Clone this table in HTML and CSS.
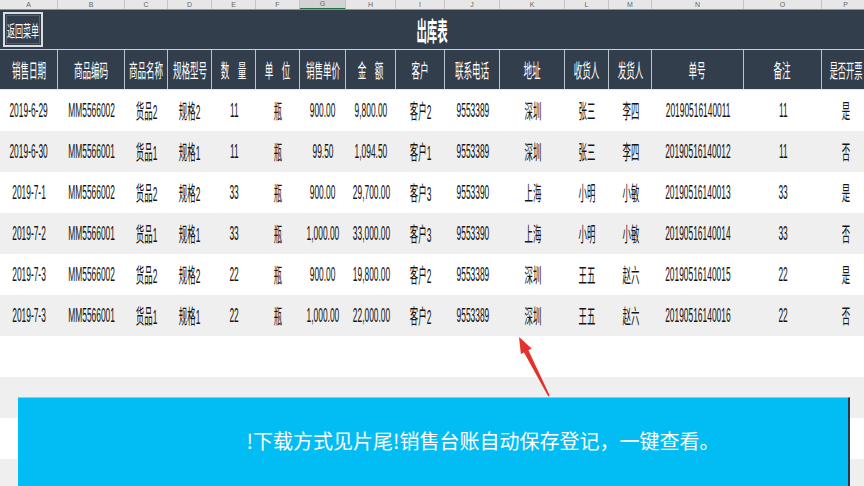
FILE: index.html
```html
<!DOCTYPE html>
<html lang="zh">
<head>
<meta charset="utf-8">
<title>出库表</title>
<link rel="stylesheet" href="styles.css">
</head>
<body>
<div class="page">
  <div class="sheet">
    <div class="colbar grid">
      <div class="cc"><span>A</span></div><div class="cc"><span>B</span></div><div class="cc"><span>C</span></div><div class="cc"><span>D</span></div>
      <div class="cc"><span>E</span></div><div class="cc"><span>F</span></div><div class="cc sel"><span>G</span></div><div class="cc"><span>H</span></div>
      <div class="cc"><span>I</span></div><div class="cc"><span>J</span></div><div class="cc"><span>K</span></div><div class="cc"><span>L</span></div>
      <div class="cc"><span>M</span></div><div class="cc"><span>N</span></div><div class="cc"><span>O</span></div><div class="cc"><span>P</span></div>
    </div>
    <div class="titlebar">
      <div class="tb-left"><div class="backbtn"><span class="t">返回菜单</span></div></div>
      <div class="title"><span class="t">出库表</span></div>
      <div class="tb-right"></div>
    </div>
    <div class="head grid">
      <div class="hc"><span class="t">销售日期</span></div>
      <div class="hc"><span class="t">商品编码</span></div>
      <div class="hc"><span class="t">商品名称</span></div>
      <div class="hc"><span class="t">规格型号</span></div>
      <div class="hc"><span class="t">数　量</span></div>
      <div class="hc"><span class="t">单　位</span></div>
      <div class="hc"><span class="t">销售单价</span></div>
      <div class="hc"><span class="t">金　额</span></div>
      <div class="hc"><span class="t">客户</span></div>
      <div class="hc"><span class="t">联系电话</span></div>
      <div class="hc"><span class="t">地址</span></div>
      <div class="hc"><span class="t">收货人</span></div>
      <div class="hc"><span class="t">发货人</span></div>
      <div class="hc"><span class="t">单号</span></div>
      <div class="hc"><span class="t">备注</span></div>
      <div class="hc last"><span class="t">是否开票</span></div>
    </div>
    <div class="row grid">
      <div class="c"><span class="t">2019-6-29</span></div><div class="c"><span class="t">MM5566002</span></div><div class="c"><span class="t">货品2</span></div><div class="c"><span class="t">规格2</span></div>
      <div class="c"><span class="t">11</span></div><div class="c"><span class="t">瓶</span></div><div class="c"><span class="t">900.00</span></div><div class="c"><span class="t">9,800.00</span></div>
      <div class="c"><span class="t">客户2</span></div><div class="c"><span class="t">9553389</span></div><div class="c"><span class="t">深圳</span></div><div class="c"><span class="t">张三</span></div>
      <div class="c"><span class="t">李四</span></div><div class="c"><span class="t">20190516140011</span></div><div class="c"><span class="t">11</span></div><div class="c"><span class="t">是</span></div>
    </div>
    <div class="row grid alt">
      <div class="c"><span class="t">2019-6-30</span></div><div class="c"><span class="t">MM5566001</span></div><div class="c"><span class="t">货品1</span></div><div class="c"><span class="t">规格1</span></div>
      <div class="c"><span class="t">11</span></div><div class="c"><span class="t">瓶</span></div><div class="c"><span class="t">99.50</span></div><div class="c"><span class="t">1,094.50</span></div>
      <div class="c"><span class="t">客户1</span></div><div class="c"><span class="t">9553389</span></div><div class="c"><span class="t">深圳</span></div><div class="c"><span class="t">张三</span></div>
      <div class="c"><span class="t">李四</span></div><div class="c"><span class="t">20190516140012</span></div><div class="c"><span class="t">11</span></div><div class="c"><span class="t">否</span></div>
    </div>
    <div class="row grid">
      <div class="c"><span class="t">2019-7-1</span></div><div class="c"><span class="t">MM5566002</span></div><div class="c"><span class="t">货品2</span></div><div class="c"><span class="t">规格2</span></div>
      <div class="c"><span class="t">33</span></div><div class="c"><span class="t">瓶</span></div><div class="c"><span class="t">900.00</span></div><div class="c"><span class="t">29,700.00</span></div>
      <div class="c"><span class="t">客户3</span></div><div class="c"><span class="t">9553390</span></div><div class="c"><span class="t">上海</span></div><div class="c"><span class="t">小明</span></div>
      <div class="c"><span class="t">小敏</span></div><div class="c"><span class="t">20190516140013</span></div><div class="c"><span class="t">33</span></div><div class="c"><span class="t">是</span></div>
    </div>
    <div class="row grid alt">
      <div class="c"><span class="t">2019-7-2</span></div><div class="c"><span class="t">MM5566001</span></div><div class="c"><span class="t">货品1</span></div><div class="c"><span class="t">规格1</span></div>
      <div class="c"><span class="t">33</span></div><div class="c"><span class="t">瓶</span></div><div class="c"><span class="t">1,000.00</span></div><div class="c"><span class="t">33,000.00</span></div>
      <div class="c"><span class="t">客户3</span></div><div class="c"><span class="t">9553390</span></div><div class="c"><span class="t">上海</span></div><div class="c"><span class="t">小明</span></div>
      <div class="c"><span class="t">小敏</span></div><div class="c"><span class="t">20190516140014</span></div><div class="c"><span class="t">33</span></div><div class="c"><span class="t">否</span></div>
    </div>
    <div class="row grid">
      <div class="c"><span class="t">2019-7-3</span></div><div class="c"><span class="t">MM5566002</span></div><div class="c"><span class="t">货品2</span></div><div class="c"><span class="t">规格2</span></div>
      <div class="c"><span class="t">22</span></div><div class="c"><span class="t">瓶</span></div><div class="c"><span class="t">900.00</span></div><div class="c"><span class="t">19,800.00</span></div>
      <div class="c"><span class="t">客户2</span></div><div class="c"><span class="t">9553389</span></div><div class="c"><span class="t">深圳</span></div><div class="c"><span class="t">王五</span></div>
      <div class="c"><span class="t">赵六</span></div><div class="c"><span class="t">20190516140015</span></div><div class="c"><span class="t">22</span></div><div class="c"><span class="t">是</span></div>
    </div>
    <div class="row grid alt">
      <div class="c"><span class="t">2019-7-3</span></div><div class="c"><span class="t">MM5566001</span></div><div class="c"><span class="t">货品1</span></div><div class="c"><span class="t">规格1</span></div>
      <div class="c"><span class="t">22</span></div><div class="c"><span class="t">瓶</span></div><div class="c"><span class="t">1,000.00</span></div><div class="c"><span class="t">22,000.00</span></div>
      <div class="c"><span class="t">客户2</span></div><div class="c"><span class="t">9553389</span></div><div class="c"><span class="t">深圳</span></div><div class="c"><span class="t">王五</span></div>
      <div class="c"><span class="t">赵六</span></div><div class="c"><span class="t">20190516140016</span></div><div class="c"><span class="t">22</span></div><div class="c"><span class="t">否</span></div>
    </div>
    <div class="row grid"></div>
    <div class="row grid alt"></div>
    <div class="row grid"></div>
    <div class="row grid alt"></div>
  </div>

  <svg class="arrow" viewBox="0 0 864 486" width="864" height="486" aria-hidden="true">
    <polygon points="519,337 531.6,348.6 528.4,350.2 549.7,395.6 548.3,396.4 524,352.4 520.9,354" fill="#e5302b"/>
  </svg>

  <div class="banner"><span>!下载方式见片尾!销售台账自动保存登记，一键查看。</span></div>
</div>
</body>
</html>
```

FILE: styles.css
```css
* { box-sizing: border-box; }
html, body { margin: 0; padding: 0; }
body {
  width: 864px;
  height: 486px;
  overflow: hidden;
  background: #ffffff;
  font-family: "Liberation Sans", "Noto Sans CJK SC", sans-serif;
}
.page {
  position: relative;
  width: 864px;
  height: 486px;
  overflow: hidden;
}
.sheet {
  width: 864px;
  display: flex;
  flex-direction: column;
}
.grid {
  display: grid;
  grid-template-columns: 58px 67px 43px 44px 44px 44px 46px 50px 49px 55px 65px 44px 43px 92px 78px 48px;
  width: 870px;
}

/* excel column letter strip */
.colbar {
  height: 10px;
  background: #e7e7e7;
  border-bottom: 1px solid #8d939a;
  overflow: hidden;
}
.cc {
  border-right: 1px solid #c4c4c4;
  display: flex;
  justify-content: center;
  align-items: center;
}
.cc span {
  font-size: 7px;
  line-height: 8px;
  color: #666;
}
.cc.sel {
  background: #d3d3d3;
  border-bottom: 2px solid #217346;
}

/* dark title band */
.titlebar {
  height: 40px;
  background: #333e4c;
  display: grid;
  grid-template-columns: 1fr auto 1fr;
  align-items: center;
  border-bottom: 1px solid #c9d0d8;
}
.tb-left { padding-left: 3px; display: flex; }
.backbtn {
  width: 40px;
  height: 35px;
  border: 2px solid #d9dde2;
  outline: 1px solid #56606d;
  outline-offset: -4px;
  display: flex;
  align-items: center;
  justify-content: center;
  color: #ffffff;
  font-size: 16px;
}
.title {
  color: #ffffff;
  font-size: 26px;
  font-weight: 700;
  display: flex;
  justify-content: center;
  width: 40px;
}
.t {
  display: inline-block;
  white-space: nowrap;
  transform: scaleX(.42);
  font-family: "Liberation Sans", "Noto Sans CJK SC", sans-serif;
}
.backbtn .t { transform: scaleX(.5); }
.title .t { transform: scaleX(.4); }

/* header row */
.head {
  height: 40px;
  background: #333e4c;
  border-bottom: 1px solid #e6e9ec;
}
.hc {
  border-right: 1px solid #b9c1ca;
  display: flex;
  align-items: center;
  justify-content: center;
  color: #ffffff;
  font-size: 19px;
}
.hc .t { transform: scaleX(.45); }
.hc.last .t { transform: scaleX(.43); }

/* data rows */
.row {
  height: 41px;
  background: #ffffff;
}
.row.alt { background: #efefef; }
.c {
  display: flex;
  align-items: center;
  justify-content: center;
  color: #141414;
  font-size: 20px;
}

/* overlay arrow */
.arrow {
  position: absolute;
  left: 0;
  top: 0;
  pointer-events: none;
}

/* bottom banner overlay */
.banner {
  position: absolute;
  left: 18px;
  top: 397px;
  width: 832px;
  height: 100px;
  background: #02bdf3;
  border-top: 1px solid #6fd6f6;
  border-right: 2px solid #2b3a48;
  display: flex;
  justify-content: center;
  padding-top: 30px;
  padding-left: 100px;
  color: #ffffff;
  font-family: "Noto Sans CJK SC", sans-serif;
  font-size: 20px;
  line-height: 26px;
}
```
